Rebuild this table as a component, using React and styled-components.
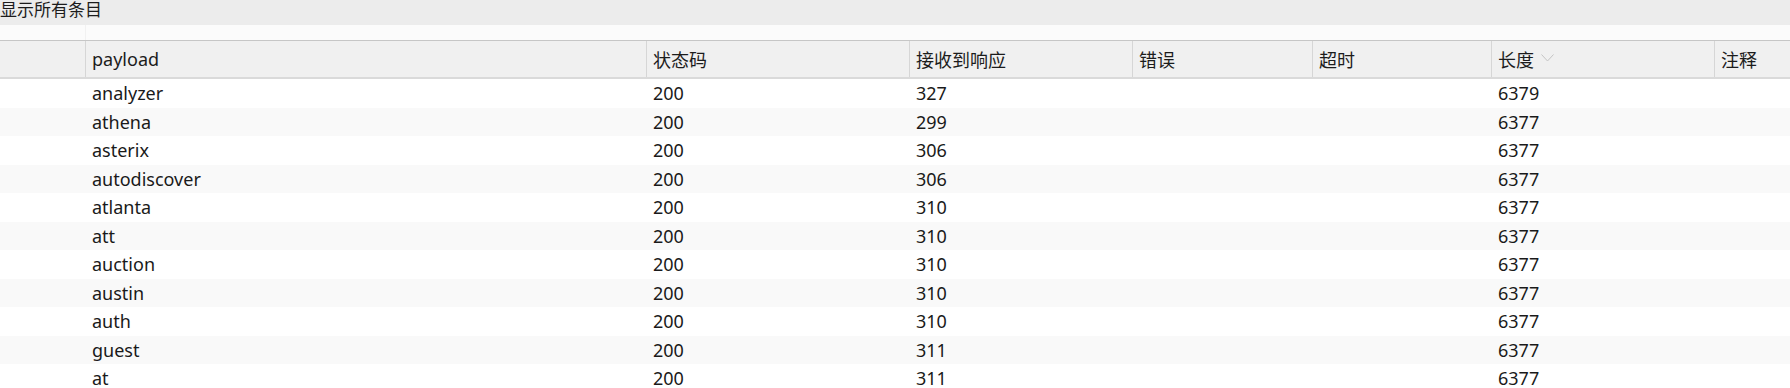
import React from 'react'
import styled, { createGlobalStyle } from 'styled-components'

const GlobalStyle = createGlobalStyle`
    html, body {
        margin: 0;
        padding: 0;
        background: #ffffff;
    }
    body {
        font-family: "Noto Sans", "Noto Sans CJK SC", sans-serif;
        color: #1a1a1a;
        overflow: hidden;
    }
`

const columns = ['payload', '状态码', '接收到响应', '错误', '超时', '长度', '注释']
const TEMPLATE = '86px 561px 263px 223px 180px 179px 223px 1fr'

const rows = [
    ['analyzer', '200', '327', '', '', '6379', ''],
    ['athena', '200', '299', '', '', '6377', ''],
    ['asterix', '200', '306', '', '', '6377', ''],
    ['autodiscover', '200', '306', '', '', '6377', ''],
    ['atlanta', '200', '310', '', '', '6377', ''],
    ['att', '200', '310', '', '', '6377', ''],
    ['auction', '200', '310', '', '', '6377', ''],
    ['austin', '200', '310', '', '', '6377', ''],
    ['auth', '200', '310', '', '', '6377', ''],
    ['guest', '200', '311', '', '', '6377', ''],
    ['at', '200', '311', '', '', '6377', ''],
]

function SortArrow() {
    return (
        <svg width="13" height="8" viewBox="0 0 13 8">
            <path d="M0.5 0.5 L6.5 7 L12.5 0.5" fill="none" stroke="#c4c4c4" strokeWidth="1" />
        </svg>
    )
}

function App() {
    return (
        <Page>
            <GlobalStyle />
            <FilterBar>显示所有条目</FilterBar>
            <Spacer>
                <span />
                <span />
            </Spacer>
            <HeaderRow>
                <HeadCell />
                {columns.map(c => (
                    <HeadCell key={c}>
                        {c}
                        {c === '长度' && <SortSlot><SortArrow /></SortSlot>}
                    </HeadCell>
                ))}
            </HeaderRow>
            {rows.map((r, i) => (
                <Row key={r[0]} $odd={i % 2 === 1}>
                    <Cell />
                    {r.map((v, j) => <Cell key={j}>{v}</Cell>)}
                </Row>
            ))}
        </Page>
    )
}

const Page = styled.div`
    width: 1790px;
    height: 388px;
    overflow: hidden;
`

const FilterBar = styled.div`
    height: 25px;
    background-color: #ececec;
    font-size: 17px;
    line-height: 20px;
    color: #1c1c1c;
    white-space: nowrap;
`

const Spacer = styled.div`
    height: 15px;
    background-color: #fbfbfb;
    display: grid;
    grid-template-columns: 86px 1fr;
    span:first-child {
        border-right: 1px solid #f1f1f1;
    }
`

const HeaderRow = styled.div`
    display: grid;
    grid-template-columns: ${TEMPLATE};
    height: 36px;
    background-color: #f0f0f0;
    border-top: 1px solid #c6c6c6;
    border-bottom: 2px solid #dadada;
`

const HeadCell = styled.div`
    display: flex;
    align-items: center;
    padding-left: 6px;
    font-size: 18px;
    color: #1c1c1c;
    border-right: 1px solid #d6d6d6;
    white-space: nowrap;
    &:last-child {
        border-right: none;
    }
`

const SortSlot = styled.span`
    display: inline-flex;
    margin-left: 7px;
    margin-top: -2px;
`

const Row = styled.div`
    display: grid;
    grid-template-columns: ${TEMPLATE};
    height: 28.5px;
    background-color: ${p => p.$odd ? '#f9f9f9' : '#ffffff'};
`

const Cell = styled.div`
    display: flex;
    align-items: center;
    padding-left: 6px;
    font-size: 18px;
    line-height: 18px;
    color: #1a1a1a;
    white-space: nowrap;
    overflow: hidden;
`

export default App
